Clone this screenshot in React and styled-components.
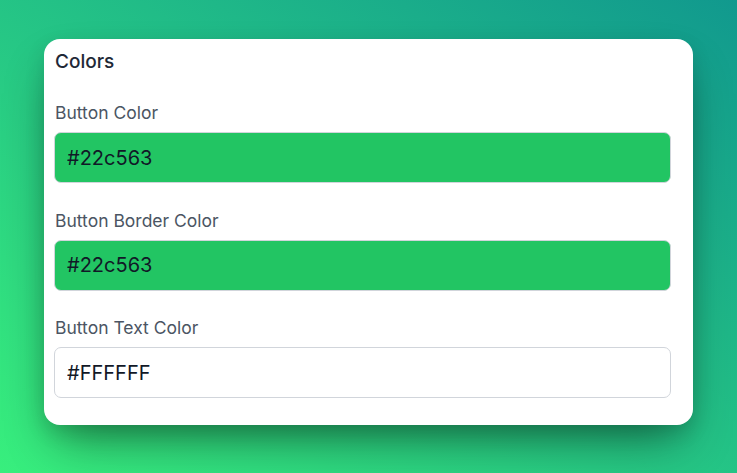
import React, { useState } from 'react';
import styled, { createGlobalStyle } from 'styled-components';

const GlobalStyle = createGlobalStyle`
  html, body {
    margin: 0;
    padding: 0;
  }
  body {
    font-family: Inter, 'Noto Sans', sans-serif;
    background: linear-gradient(to top right, #38ef7d, #11998e);
    min-height: 100vh;
  }
  * {
    box-sizing: border-box;
  }
`;

const Page = styled.div`
  min-height: 100vh;
  padding: 39px 44px 50px;
`;

const Card = styled.div`
  background: #fff;
  border-radius: 16px;
  padding: 10px 22px 27px 10px;
  box-shadow: 0 25px 50px -12px rgba(0, 0, 0, 0.45), 0 8px 20px rgba(0, 0, 0, 0.12);
  display: flex;
  flex-direction: column;
  gap: 25.5px;
`;

const Title = styled.h2`
  margin: 0 0 1.5px;
  padding: 1px 0 0 1px;
  font-size: 19px;
  line-height: 24px;
  font-weight: 500;
  color: #1f2937;
`;

const Field = styled.div`
  display: flex;
  flex-direction: column;
  gap: 7px;
`;

const Label = styled.label`
  font-size: 17.5px;
  line-height: 24px;
  color: #4b5563;
  padding-left: 1px;
`;

const ColorInput = styled.input`
  height: 51px;
  width: 100%;
  border: 1px solid #d1d5db;
  border-radius: 7px;
  padding: 0 12px;
  font-family: inherit;
  font-size: 20px;
  color: #111827;
  background: ${p => p.$fill || '#fff'};
  outline: none;
`;

const fields = [
  { label: 'Button Color', value: '#22c563', fill: '#22c563' },
  { label: 'Button Border Color', value: '#22c563', fill: '#22c563' },
  { label: 'Button Text Color', value: '#FFFFFF', fill: '#FFFFFF' },
];

const App = () => {
  const [values, setValues] = useState(fields.map(f => f.value));
  return (
    <Page>
      <GlobalStyle />
      <Card>
        <Title>Colors</Title>
        {fields.map((f, i) => (
          <Field key={f.label}>
            <Label>{f.label}</Label>
            <ColorInput
              $fill={f.fill}
              value={values[i]}
              onChange={e => setValues(values.map((v, j) => (j === i ? e.target.value : v)))}
            />
          </Field>
        ))}
      </Card>
    </Page>
  );
};

export default App;
